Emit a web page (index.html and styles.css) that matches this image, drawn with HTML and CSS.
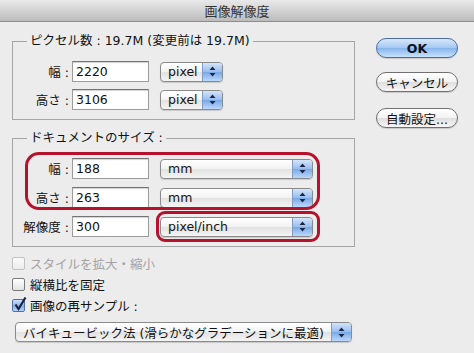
FILE: index.html
```html
<!DOCTYPE html>
<html lang="ja">
<head>
    <meta charset="UTF-8">
    <title>画像解像度</title>
    <link rel="stylesheet" href="styles.css">
</head>
<body>
    <div class="dialog">
        <div class="titlebar">画像解像度</div>
        <div class="content">
            <div class="main">
                <fieldset class="group">
                    <legend>ピクセル数 : 19.7M (変更前は 19.7M)</legend>
                    <div class="rows">
                        <div class="row">
                            <span class="lbl">幅 :</span>
                            <span class="field">2220</span>
                            <span class="popup popup-short">
                                <span class="popup-text">pixel</span>
                                <span class="popup-arrows"><svg width="7" height="11" viewBox="0 0 7 11"><path d="M3.5 0.5 L6.5 4 H0.5 Z M3.5 10.5 L6.5 7 H0.5 Z"/></svg></span>
                            </span>
                        </div>
                        <div class="row">
                            <span class="lbl">高さ :</span>
                            <span class="field">3106</span>
                            <span class="popup popup-short">
                                <span class="popup-text">pixel</span>
                                <span class="popup-arrows"><svg width="7" height="11" viewBox="0 0 7 11"><path d="M3.5 0.5 L6.5 4 H0.5 Z M3.5 10.5 L6.5 7 H0.5 Z"/></svg></span>
                            </span>
                        </div>
                    </div>
                </fieldset>

                <fieldset class="group group-doc">
                    <legend>ドキュメントのサイズ :</legend>
                    <div class="rows">
                        <div class="row">
                            <span class="lbl">幅 :</span>
                            <span class="field">188</span>
                            <span class="popup popup-long">
                                <span class="popup-text">mm</span>
                                <span class="popup-arrows"><svg width="7" height="11" viewBox="0 0 7 11"><path d="M3.5 0.5 L6.5 4 H0.5 Z M3.5 10.5 L6.5 7 H0.5 Z"/></svg></span>
                            </span>
                        </div>
                        <div class="row">
                            <span class="lbl">高さ :</span>
                            <span class="field">263</span>
                            <span class="popup popup-long">
                                <span class="popup-text">mm</span>
                                <span class="popup-arrows"><svg width="7" height="11" viewBox="0 0 7 11"><path d="M3.5 0.5 L6.5 4 H0.5 Z M3.5 10.5 L6.5 7 H0.5 Z"/></svg></span>
                            </span>
                        </div>
                        <div class="row">
                            <span class="lbl">解像度 :</span>
                            <span class="field">300</span>
                            <span class="popup popup-long">
                                <span class="popup-text">pixel/inch</span>
                                <span class="popup-arrows"><svg width="7" height="11" viewBox="0 0 7 11"><path d="M3.5 0.5 L6.5 4 H0.5 Z M3.5 10.5 L6.5 7 H0.5 Z"/></svg></span>
                            </span>
                        </div>
                        <!-- red annotation rings -->
                        <span class="ring ring-size"></span>
                        <span class="ring ring-res"></span>
                    </div>
                </fieldset>

                <div class="checks">
                    <div class="check disabled"><span class="box"></span>スタイルを拡大・縮小</div>
                    <div class="check"><span class="box"></span>縦横比を固定</div>
                    <div class="check"><span class="box checked"><svg width="14" height="16" viewBox="0 0 14 16"><path d="M2.5 8.5 L5.5 13 L12.5 1.5" fill="none" stroke="#1a2240" stroke-width="2.2"/></svg></span>画像の再サンプル :</div>
                </div>

                <span class="popup popup-wide">
                    <span class="popup-text">バイキュービック法 (滑らかなグラデーションに最適)</span>
                    <span class="popup-arrows"><svg width="7" height="11" viewBox="0 0 7 11"><path d="M3.5 0.5 L6.5 4 H0.5 Z M3.5 10.5 L6.5 7 H0.5 Z"/></svg></span>
                </span>
            </div>

            <div class="buttons">
                <button class="btn btn-default">OK</button>
                <button class="btn btn-cancel">キャンセル</button>
                <button class="btn btn-auto">自動設定...</button>
            </div>
        </div>
    </div>
</body>
</html>
```

FILE: styles.css
```css
body {
    margin: 0;
    background-color: #ececec;
    font-family: "DejaVu Sans", "Noto Sans CJK JP", sans-serif;
    font-size: 12.5px;
    color: #111;
}
.dialog {
    width: 474px;
    height: 353px;
    overflow: hidden;
}
.titlebar {
    height: 21px;
    line-height: 21px;
    border-bottom: 1px solid #8d8d8d;
    background: linear-gradient(#e9e9e9, #bcbcbc);
    text-align: center;
    font-family: "Noto Sans CJK JP", sans-serif;
    font-size: 13px;
    color: #333;
}
.content {
    display: flex;
}
.main {
    width: 343px;
    margin-left: 12px;
    padding-top: 11px;
}
.group {
    margin: 0;
    padding: 0;
    min-width: 0;
    border: 1px solid #a6a6a6;
}
.group legend {
    margin-left: 14px;
    padding: 0 3px;
    line-height: 16px;
}
.group-doc {
    margin-top: 10px;
}
.rows {
    display: flex;
    flex-direction: column;
    gap: 7px;
    padding: 12px 0 9px;
}
.group-doc .rows {
    position: relative;
    gap: 8px;
}
.row {
    display: flex;
    align-items: center;
    height: 21px;
}
.lbl {
    width: 56px;
    text-align: right;
}
.field {
    display: flex;
    align-items: center;
    box-sizing: border-box;
    width: 77px;
    height: 21px;
    margin-left: 3px;
    padding-left: 3px;
    background: #fff;
    border: 1px solid #9c9c9c;
    border-top-color: #737373;
    box-shadow: inset 0 1px 1px rgba(0, 0, 0, 0.18);
}
.popup {
    display: flex;
    align-items: center;
    box-sizing: border-box;
    height: 20px;
    margin-left: 11px;
    border: 1px solid #8a8a8a;
    border-radius: 4px;
    background: linear-gradient(#ffffff, #f2f2f2 50%, #e2e2e2 51%, #f4f4f4);
    box-shadow: 0 1px 1px rgba(0, 0, 0, 0.15);
    overflow: hidden;
}
.popup-short {
    width: 63px;
}
.popup-long {
    width: 153px;
}
.popup-wide {
    width: 337px;
    margin: 6px 0 0 3px;
}
.popup-text {
    flex: 1;
    padding-left: 7px;
    white-space: nowrap;
}
.popup-arrows {
    display: flex;
    align-items: center;
    justify-content: center;
    width: 19px;
    height: 100%;
    border-left: 1px solid #7f9cc6;
    background: linear-gradient(#d3e5fb, #98bcee 50%, #78a8e8 51%, #bcd8fa);
}
.popup-arrows svg {
    fill: #1c2846;
}
.ring {
    position: absolute;
    box-sizing: border-box;
    border: 3px solid #b5122b;
    pointer-events: none;
}
.ring-size {
    left: 12px;
    top: 6px;
    width: 295px;
    height: 58px;
    border-radius: 14px;
}
.ring-res {
    left: 143px;
    top: 65px;
    width: 164px;
    height: 31px;
    border-radius: 9px;
}
.checks {
    margin-top: 6px;
}
.check {
    display: flex;
    align-items: center;
    gap: 5px;
    height: 21px;
}
.check.disabled {
    color: #a3a3a3;
}
.box {
    position: relative;
    box-sizing: border-box;
    width: 13px;
    height: 13px;
    border: 1px solid #7a7a7a;
    border-radius: 2px;
    background: linear-gradient(#ffffff, #e4e4e4);
}
.check.disabled .box {
    border-color: #c2c2c2;
    background: linear-gradient(#fafafa, #ececec);
}
.box.checked {
    border-color: #55729f;
    background: linear-gradient(#cfe2fa, #86b1ea 55%, #b4d3fa);
}
.box.checked svg {
    position: absolute;
    left: 0;
    top: -4px;
}
.buttons {
    display: flex;
    flex-direction: column;
    width: 82px;
    margin-left: 21px;
    padding-top: 16px;
}
.btn {
    height: 20px;
    padding: 0;
    border: 1px solid #707070;
    border-radius: 10px;
    background: linear-gradient(#ffffff, #f3f3f3 50%, #dedede 51%, #f7f7f7);
    box-shadow: 0 1px 1px rgba(0, 0, 0, 0.15);
    font-family: inherit;
    font-size: 12.5px;
    color: #111;
}
.btn-default {
    border-color: #4c6c9f;
    background: linear-gradient(#d8e8fc, #a3c6f1 50%, #86b4ec 51%, #c8e2fd);
    font-weight: bold;
}
.btn-cancel {
    margin-top: 14px;
}
.btn-auto {
    margin-top: 16px;
}
```
